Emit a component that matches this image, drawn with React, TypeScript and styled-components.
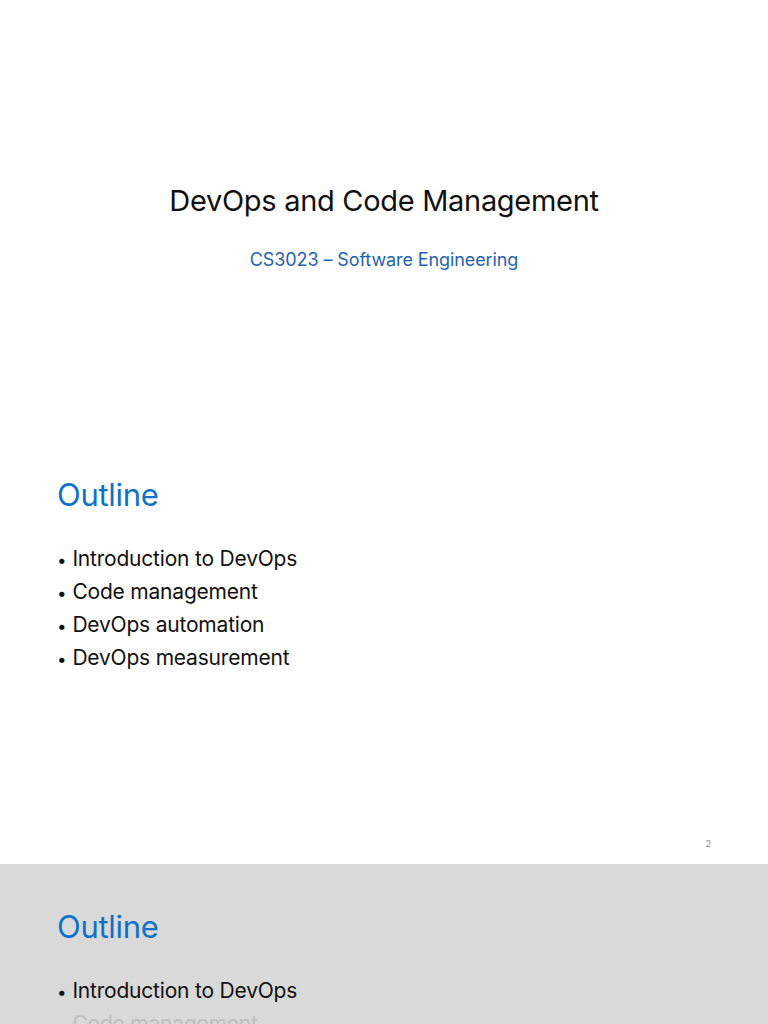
import React from 'react';
import styled, { createGlobalStyle } from 'styled-components';

const Global = createGlobalStyle`
  html, body { margin: 0; padding: 0; background: #fff; }
  body { font-family: Inter, "Noto Sans", sans-serif; height: 1024px; overflow: hidden; }
`;

const Slide = styled.section<{ $grey?: boolean }>`
  position: relative;
  height: 432px;
  box-sizing: border-box;
  background: ${(p) => (p.$grey ? '#d9d9d9' : '#fff')};
`;

const TitleSlide = styled(Slide)`
  display: flex;
  flex-direction: column;
  align-items: center;
  padding-top: 183px;
`;

const MainTitle = styled.h1`
  margin: 0;
  font-size: 29px;
  font-weight: 400;
  color: #111;
  letter-spacing: -0.3px;
`;

const Subtitle = styled.p`
  margin: 31px 0 0;
  font-size: 18px;
  color: #1f63ad;
  letter-spacing: -0.1px;
`;

const ContentSlide = styled(Slide)`
  padding: 44px 57px 0;
`;

const Heading = styled.h2`
  margin: 0;
  font-size: 31px;
  font-weight: 400;
  color: #0f72c6;
  letter-spacing: -0.3px;
`;

const List = styled.ul`
  list-style: none;
  margin: 30px 0 0;
  padding: 0;
`;

const Item = styled.li<{ $dim?: boolean }>`
  font-size: 21px;
  line-height: 32px;
  color: ${(p) => (p.$dim ? '#bdbdbd' : '#111')};
  letter-spacing: -0.2px;
  &::before { content: '•'; margin-right: 6px; font-size: 17px; }
`;

const PageNum = styled.span`
  position: absolute;
  right: 57px;
  bottom: 15px;
  font-size: 9px;
  color: #8a8a8a;
`;

const items = ['Introduction to DevOps', 'Code management', 'DevOps automation', 'DevOps measurement'];

export default function App() {
  return (
    <>
      <Global />
      <TitleSlide>
        <MainTitle>DevOps and Code Management</MainTitle>
        <Subtitle>CS3023 – Software Engineering</Subtitle>
      </TitleSlide>
      <ContentSlide>
        <Heading>Outline</Heading>
        <List>
          {items.map((t) => <Item key={t}>{t}</Item>)}
        </List>
        <PageNum>2</PageNum>
      </ContentSlide>
      <ContentSlide $grey>
        <Heading>Outline</Heading>
        <List>
          {items.map((t, i) => <Item key={t} $dim={i > 0}>{t}</Item>)}
        </List>
      </ContentSlide>
    </>
  );
}
